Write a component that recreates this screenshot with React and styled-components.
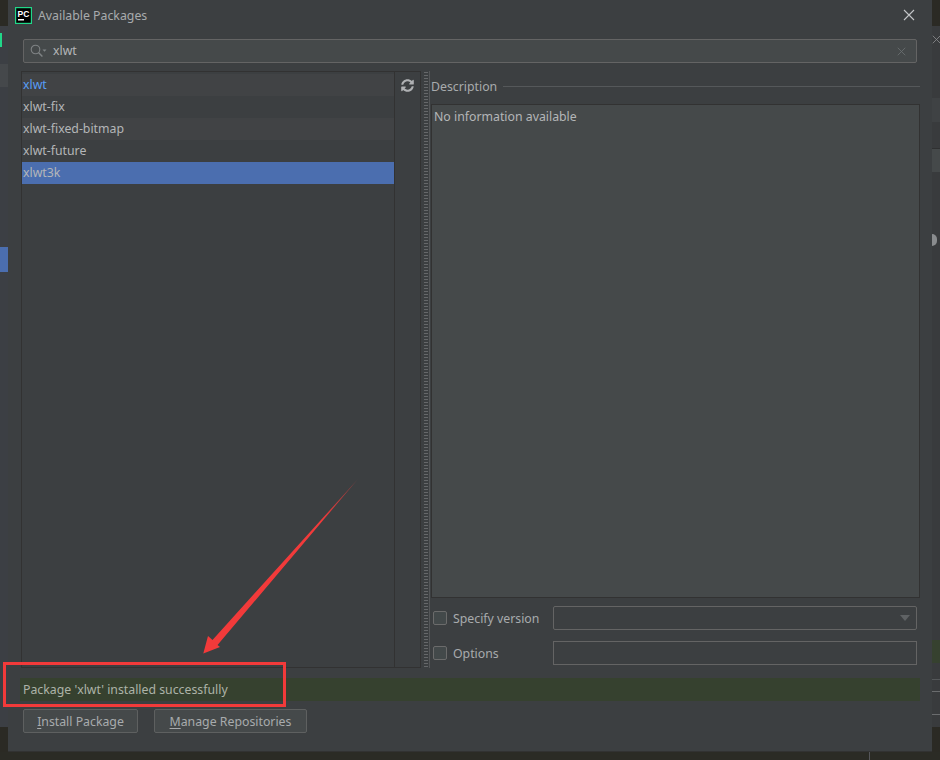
import React from 'react';
import styled, { createGlobalStyle } from 'styled-components';
import { FaSyncAlt } from 'react-icons/fa';

const GlobalStyle = createGlobalStyle`
  html, body { margin: 0; padding: 0; background: #2b2b27; }
  body { font-family: "Noto Sans", "Open Sans", sans-serif; font-size: 12.3px; color: #b4b6b8; }
  * { box-sizing: border-box; }
`;

const Page = styled.div`
  position: relative;
  width: 940px;
  height: 760px;
  overflow: hidden;
`;

const Stage = styled.div`
  display: flex;
  height: 752px;
`;

const BottomStrip = styled.div`
  height: 8px;
  background: linear-gradient(90deg, #2b2b25 0 869px, #55565a 869px 870px, #2b2b25 870px);
`;

// slivers of the IDE that stay visible around the dialog
const Edge = styled.div`
  flex: none;
  width: 8px;
  display: flex;
  flex-direction: column;
  overflow: hidden;
  background: ${(p) => p.$bg || '#3c3f44'};
`;

const EdgeBand = styled.div`
  flex: ${(p) => (p.$fill ? '1' : 'none')};
  height: ${(p) => (p.$fill ? 'auto' : `${p.$h}px`)};
  padding-top: ${(p) => p.$pad || 0}px;
  background: ${(p) => p.$bg || 'transparent'};
  border-top: ${(p) => (p.$line ? `1px solid ${p.$line}` : 'none')};
`;

const EdgeKnob = styled.div`
  width: 5px;
  height: 12px;
  background: #8a8c8e;
  border-radius: 0 6px 6px 0;
`;

const Dialog = styled.div`
  flex: none;
  width: 924px;
  height: 752px;
  display: flex;
  flex-direction: column;
  background: #3c3f41;
  border-bottom: 1px solid #323232;
`;

const TitleBar = styled.div`
  height: 30px;
  display: flex;
  align-items: center;
  padding: 0 17px 0 7px;
  gap: 6px;
`;

const Title = styled.span`
  flex: 1;
  color: #a8abad;
`;

const CloseButton = styled.button`
  width: 12px;
  height: 12px;
  padding: 0;
  border: 0;
  background: none;
  display: flex;
`;

const SearchBox = styled.div`
  height: 24px;
  margin: 9px 15px 0 15px;
  padding: 0 10px 0 6px;
  display: flex;
  align-items: center;
  gap: 6px;
  background: #45494a;
  border: 1px solid #646464;
  border-radius: 2px;
`;

const SearchText = styled.span`
  flex: 1;
  line-height: 20px;
`;

const Body = styled.div`
  height: 597px;
  margin: 8px 12px 0 13px;
  display: flex;
`;

const PackageList = styled.ul`
  flex: none;
  width: 374px;
  margin: 0;
  padding: 2px 0 0;
  list-style: none;
  border: 1px solid #323232;
`;

const PackageRow = styled.li`
  height: 22px;
  padding-left: 1px;
  line-height: 22px;
  background: ${(p) => (p.$selected ? '#4b6eaf' : p.$odd ? '#414345' : 'transparent')};
  color: ${(p) => (p.$installed ? '#589df6' : '#b4b6b8')};
`;

const ListTools = styled.div`
  flex: none;
  width: 26px;
  padding-top: 7px;
  display: flex;
  justify-content: center;
  align-items: flex-start;
  border: 1px solid #323232;
  border-left: 0;
  color: #afb1b3;
  font-size: 13px;
`;

const Splitter = styled.div`
  flex: none;
  width: 8px;
  &::before {
    content: '';
    display: block;
    width: 4px;
    height: 100%;
    margin-left: 3px;
    background: radial-gradient(circle, #66686a 0.8px, transparent 1px) 0 0 / 2px 3px;
  }
`;

const DetailPane = styled.div`
  flex: 1;
  min-width: 0;
  display: flex;
  flex-direction: column;
  border-left: 1px solid #555759;
`;

const SectionHeader = styled.div`
  height: 33px;
  padding: 0 0 3px 1px;
  display: flex;
  align-items: center;
  gap: 6px;
  color: #a8abad;
  &::after {
    content: '';
    flex: 1;
    height: 1px;
    background: #55585a;
  }
`;

const DescriptionBox = styled.div`
  height: 494px;
  margin-left: 1px;
  padding: 3px 2px;
  background: #45494a;
  border: 1px solid #323232;
`;

const OptionRow = styled.div`
  height: 24px;
  margin: ${(p) => (p.$first ? '8px' : '11px')} 3px 0 3px;
  display: flex;
  align-items: center;
`;

const CheckBox = styled.span`
  flex: none;
  width: 14px;
  height: 14px;
  background: #43494a;
  border: 1px solid #6b6b6b;
  border-radius: 2px;
`;

const OptionLabel = styled.label`
  flex: none;
  width: 100px;
  margin-left: 6px;
  color: #a8abad;
`;

const OptionInput = styled.div`
  flex: 1;
  height: 24px;
  display: flex;
  align-items: center;
  justify-content: flex-end;
  padding-right: 6px;
  background: #3c3f41;
  border: 1px solid #646464;
  border-radius: ${(p) => (p.$round ? '2px' : '0')};
`;

const ComboArrow = styled.span`
  width: 0;
  height: 0;
  border-left: 5px solid transparent;
  border-right: 5px solid transparent;
  border-top: 6px solid #5f6264;
`;

const StatusBar = styled.div`
  height: 23px;
  margin: 10px 12px 0 12px;
  padding-left: 3px;
  line-height: 23px;
  background: #36412f;
  color: #adb3a8;
`;

const Footer = styled.div`
  margin: 8px 0 0 15px;
  display: flex;
  gap: 16px;
`;

const Button = styled.button`
  width: ${(p) => p.$w}px;
  height: 24px;
  padding: 0;
  font: inherit;
  color: #a8abad;
  background: #45494a;
  border: 1px solid #5e6060;
  border-radius: 2px;
`;

const Mnemonic = styled.span`
  text-decoration: underline;
  text-underline-offset: 2px;
`;

// the red markup someone drew on top of the screenshot
const MarkupBox = styled.div`
  position: absolute;
  left: 3px;
  top: 662px;
  width: 283px;
  height: 45px;
  border: 3px solid #f23a3a;
`;

const MarkupArrow = styled.svg`
  position: absolute;
  left: 195px;
  top: 470px;
`;

const PyCharmLogo = () => (
  <svg width="17" height="17" viewBox="0 0 17 17">
    <rect x="0.6" y="0.6" width="15.8" height="15.8" fill="#000" stroke="#21d789" strokeWidth="1.2" />
    <text x="2.6" y="9.6" fontFamily="Liberation Sans, sans-serif" fontWeight="700" fontSize="8.5" fill="#fff">PC</text>
    <rect x="3" y="12" width="6" height="1.5" fill="#fff" />
  </svg>
);

const CrossIcon = ({ size, color }) => (
  <svg width={size} height={size} viewBox="0 0 12 12" style={{ display: 'block' }}>
    <path d="M1 1 L11 11 M11 1 L1 11" stroke={color} strokeWidth="1.1" fill="none" />
  </svg>
);

const SearchIcon = () => (
  <svg width="17" height="14" viewBox="0 0 17 14">
    <circle cx="5.5" cy="5.5" r="4.3" fill="none" stroke="#7f8385" strokeWidth="1.1" />
    <path d="M8.7 8.7 L12.4 12.6" stroke="#7f8385" strokeWidth="1.4" />
    <path d="M12.5 5.5 h4 l-2 2.2 z" fill="#7f8385" />
  </svg>
);

const packages = ['xlwt', 'xlwt-fix', 'xlwt-fixed-bitmap', 'xlwt-future', 'xlwt3k'];

const App = () => (
  <Page>
    <GlobalStyle />
    <Stage>
      <Edge>
        <EdgeBand $h={26} $bg="#2b2a24" />
        <EdgeBand $h={7} />
        <EdgeBand $h={14} $bg="linear-gradient(90deg, #21d789 0 2px, transparent 2px)" />
        <EdgeBand $h={17} />
        <EdgeBand $h={23} $bg="#45484b" />
        <EdgeBand $h={160} />
        <EdgeBand $h={25} $bg="#4b6eaf" />
        <EdgeBand $h={455} />
        <EdgeBand $fill $bg="#2b2a24" />
      </Edge>
      <Dialog>
        <TitleBar>
          <PyCharmLogo />
          <Title>Available Packages</Title>
          <CloseButton aria-label="Close">
            <CrossIcon size={12} color="#c4c6c8" />
          </CloseButton>
        </TitleBar>
        <SearchBox>
          <SearchIcon />
          <SearchText>xlwt</SearchText>
          <CrossIcon size={9} color="#6b7071" />
        </SearchBox>
        <Body>
          <PackageList>
            {packages.map((name, i) => (
              <PackageRow
                key={name}
                $odd={i % 2 === 0}
                $installed={i === 0}
                $selected={name === 'xlwt3k'}
              >
                {name}
              </PackageRow>
            ))}
          </PackageList>
          <ListTools>
            <FaSyncAlt />
          </ListTools>
          <Splitter />
          <DetailPane>
            <SectionHeader>Description</SectionHeader>
            <DescriptionBox>No information available</DescriptionBox>
            <OptionRow $first>
              <CheckBox />
              <OptionLabel>Specify version</OptionLabel>
              <OptionInput $round>
                <ComboArrow />
              </OptionInput>
            </OptionRow>
            <OptionRow>
              <CheckBox />
              <OptionLabel>Options</OptionLabel>
              <OptionInput />
            </OptionRow>
          </DetailPane>
        </Body>
        <StatusBar>Package 'xlwt' installed successfully</StatusBar>
        <Footer>
          <Button $w={115}><Mnemonic>I</Mnemonic>nstall Package</Button>
          <Button $w={153}><Mnemonic>M</Mnemonic>anage Repositories</Button>
        </Footer>
      </Dialog>
      <Edge $bg="#393b3d">
        <EdgeBand $h={26} $bg="#2b2a24" />
        <EdgeBand $h={72} $pad={9}>
          <CrossIcon size={9} color="#8a8c8e" />
        </EdgeBand>
        <EdgeBand $h={24} $bg="#3f4244" />
        <EdgeBand $h={26} />
        <EdgeBand $h={24} $bg="#45494a" $line="#2f3031" />
        <EdgeBand $h={60} />
        <EdgeBand $h={408} $pad={2}>
          <EdgeKnob />
        </EdgeBand>
        <EdgeBand $h={23} $bg="#36412f" />
        <EdgeBand $h={16} />
        <EdgeBand $h={12} $line="#55585a" />
        <EdgeBand $h={23} $line="#6a6c6e" />
        <EdgeBand $h={13} $line="#6a6c6e" />
        <EdgeBand $fill $bg="#2b2a24" />
      </Edge>
    </Stage>
    <BottomStrip />
    <MarkupBox />
    <MarkupArrow width="170" height="190" viewBox="195 470 170 190">
      <defs>
        <linearGradient id="arrowFade" x1="358" y1="480" x2="320" y2="522" gradientUnits="userSpaceOnUse">
          <stop offset="0" stopColor="#f23a3a" stopOpacity="0.45" />
          <stop offset="1" stopColor="#f23a3a" />
        </linearGradient>
      </defs>
      <polygon
        points="203.3,653.5 208,636 212.5,640 358,479 217.5,645 220,647"
        fill="url(#arrowFade)"
      />
    </MarkupArrow>
  </Page>
);

export default App;
